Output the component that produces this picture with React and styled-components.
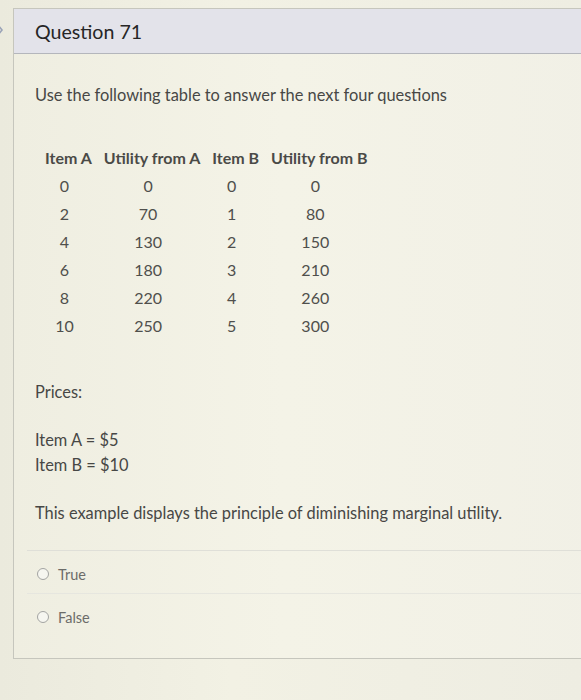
import styled, { createGlobalStyle } from "styled-components";

const GlobalStyle = createGlobalStyle`
  html, body {
    margin: 0;
    padding: 0;
    background: #ecebdf;
    font-family: Lato, "Open Sans", sans-serif;
  }
`;

const rows = [
  [0, 0, 0, 0],
  [2, 70, 1, 80],
  [4, 130, 2, 150],
  [6, 180, 3, 210],
  [8, 220, 4, 260],
  [10, 250, 5, 300],
];

const App = () => {
  return (
    <Page>
      <GlobalStyle />
      <Gutter>
        <svg width="6" height="12" viewBox="0 0 6 12">
          <path d="M0 1 L4 6 L0 11" fill="none" stroke="#9aa3b8" strokeWidth="1.6" />
        </svg>
      </Gutter>
      <Card>
        <Header>
          <Title>Question 71</Title>
        </Header>
        <Body>
          <Para>Use the following table to answer the next four questions</Para>
          <Table>
            <thead>
              <tr>
                <Th>Item A</Th>
                <Th>Utility from A</Th>
                <Th>Item B</Th>
                <Th>Utility from B</Th>
              </tr>
            </thead>
            <tbody>
              {rows.map((r, i) => (
                <tr key={i}>
                  {r.map((v, j) => (
                    <Td key={j}>{v}</Td>
                  ))}
                </tr>
              ))}
            </tbody>
          </Table>
          <Prices>Prices:</Prices>
          <PriceList>
            <PriceLine>Item A = $5</PriceLine>
            <PriceLine>Item B = $10</PriceLine>
          </PriceList>
          <Statement>This example displays the principle of diminishing marginal utility.</Statement>
        </Body>
        <Answers>
          <Answer>
            <Radio />
            <AnswerText>True</AnswerText>
          </Answer>
          <Answer>
            <Radio />
            <AnswerText>False</AnswerText>
          </Answer>
        </Answers>
      </Card>
    </Page>
  );
};

const Page = styled.div`
  width: 581px;
  height: 700px;
  overflow: hidden;
  padding-top: 8px;
  box-sizing: border-box;
  display: flex;
  align-items: flex-start;
  background: linear-gradient(90deg, #ebeadd 0%, #f2f1e4 40%, #eeede2 100%);
`;

const Gutter = styled.div`
  width: 13px;
  flex-shrink: 0;
  padding-top: 16px;
  margin-left: -2px;
  margin-right: 2px;
  display: flex;
`;

const Card = styled.div`
  width: 600px;
  flex-shrink: 0;
  border: 1px solid #c6c6bd;
  border-right: none;
  background: linear-gradient(90deg, #efeee1 0%, #f4f3e7 45%, #f1f0e6 100%);
`;

const Header = styled.div`
  height: 44px;
  background: #e3e3ea;
  border-bottom: 1px solid #b4b6bc;
  display: flex;
  align-items: center;
  padding-left: 21px;
`;

const Title = styled.h2`
  margin: 0;
  font-size: 19.6px;
  font-weight: 400;
  color: #262626;
`;

const Body = styled.div`
  padding: 31px 0 0 21px;
  color: #474745;
  font-size: 16.4px;
  line-height: 20px;
`;

const Para = styled.p`
  margin: 0;
`;

const Table = styled.table`
  margin: 39px 0 0 4px;
  border-collapse: collapse;
  font-size: 16px;
`;

const Th = styled.th`
  font-weight: 700;
  height: 28px;
  padding: 0 6px;
  text-align: center;
  color: #4a4a47;
`;

const Td = styled.td`
  text-align: center;
  height: 28px;
  padding: 0 10px 0 2px;
  color: #4f4f4c;
`;

const Prices = styled.p`
  margin: 42px 0 0;
`;

const PriceList = styled.div`
  margin-top: 28px;
  display: flex;
  flex-direction: column;
  gap: 5px;
`;

const PriceLine = styled.div``;

const Statement = styled.p`
  margin: 28px 0 0;
`;

const Answers = styled.div`
  margin: 27px 0 0 13px;
  padding-bottom: 22px;
`;

const Answer = styled.div`
  display: flex;
  align-items: center;
  gap: 9px;
  height: 43px;
  padding: 4px 0 0 10px;
  border-top: 1px solid #dfdfd8;
  box-sizing: border-box;

  & + & {
    border-top-color: #e6e6df;
  }
`;

const Radio = styled.span`
  width: 10px;
  height: 10px;
  border: 1px solid #a3a4a2;
  border-radius: 50%;
  background: #f6f6f0;
`;

const AnswerText = styled.span`
  font-size: 14.5px;
  color: #6c6c69;
`;

export default App;
